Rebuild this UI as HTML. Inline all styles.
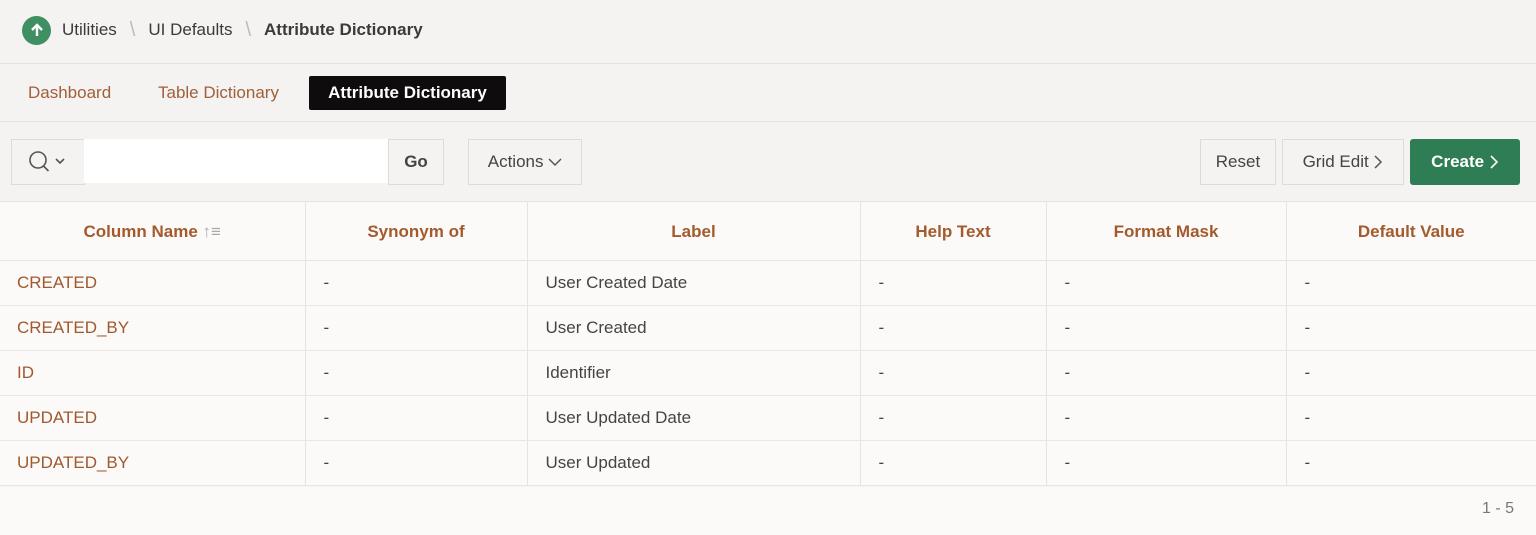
<!DOCTYPE html>
<html><head><style>
*{box-sizing:border-box;margin:0;padding:0}
body{width:1536px;height:535px;overflow:hidden;background:#f4f3f1;font-family:"Liberation Sans",sans-serif;color:#333;position:relative}
.abs{position:absolute}
.bc{top:14px;left:22px;height:32px;display:flex;align-items:center;font-size:17px;color:#3a3a3a}
.circ{width:29px;height:29px;border-radius:50%;background:#3f8f63;display:flex;align-items:center;justify-content:center;margin-right:11px}
.sep{color:#bbb;margin:0 13px;font-size:20px}
.hline{left:0;width:1536px;height:1px;background:#e4e2df}
.tab{top:76px;height:34px;font-size:17px;color:#a0603a;line-height:34px}
.btn{border:1px solid #dddbd8;background:#f4f3f1;font-size:17px;color:#444;display:flex;align-items:center;justify-content:center;height:46px;top:139px}
table{position:absolute;top:202px;left:0;width:1536px;border-collapse:collapse;background:#fbfaf9;font-size:17px}
th{height:58px;padding-top:2px;color:#a35a2c;font-weight:bold;border-right:1px solid #e6e4e1;border-bottom:1px solid #e6e4e1}
td{height:45.2px;border-right:1px solid #e6e4e1;border-bottom:1px solid #e9e7e4;padding-left:18px;color:#444}
td:first-child{padding-left:17px;color:#a0582d}
th:last-child,td:last-child{border-right:none}
</style></head><body>
<div class="abs bc"><div class="circ"><svg width="16" height="16" viewBox="0 0 16 16"><path d="M8 14V3M3 8l5-5 5 5" stroke="#fff" stroke-width="2.4" fill="none"/></svg></div>Utilities<span class="sep">\</span>UI Defaults<span class="sep">\</span><b>Attribute Dictionary</b></div>
<div class="abs hline" style="top:63px"></div>
<div class="abs tab" style="left:28px">Dashboard</div>
<div class="abs tab" style="left:158px">Table Dictionary</div>
<div class="abs tab" style="left:309px;width:197px;background:#0e0c0c;color:#fff;font-weight:bold;border-radius:2px;text-align:center">Attribute Dictionary</div>
<div class="abs hline" style="top:121px"></div>
<div class="abs btn" style="left:11px;width:74px"><svg width="44" height="24" viewBox="0 0 44 24"><circle cx="12" cy="10" r="8" stroke="#555" stroke-width="1.6" fill="none"/><path d="M17.5 16l5 5M30 9l4 4 4-4" stroke="#555" stroke-width="1.6" fill="none"/></svg></div>
<div class="abs" style="left:84px;top:139px;width:305px;height:44px;background:#fff"></div>
<div class="abs btn" style="left:388px;width:56px;font-weight:bold">Go</div>
<div class="abs btn" style="left:468px;width:114px">Actions&nbsp;<svg width="14" height="10"><path d="M1 2l6 6 6-6" stroke="#555" stroke-width="1.5" fill="none"/></svg></div>
<div class="abs btn" style="left:1200px;width:76px">Reset</div>
<div class="abs btn" style="left:1282px;width:122px">Grid Edit&nbsp;<svg width="10" height="14"><path d="M2 1l6 6-6 6" stroke="#555" stroke-width="1.5" fill="none"/></svg></div>
<div class="abs btn" style="left:1410px;width:110px;background:#2f7d55;border-color:#2f7d55;color:#fff;font-weight:bold;border-radius:3px">Create&nbsp;<svg width="10" height="14"><path d="M2 1l6 6-6 6" stroke="#fff" stroke-width="1.6" fill="none"/></svg></div>
<div class="abs hline" style="top:201px"></div>
<table>
<tr><th style="width:305px">Column Name <span style="color:#aaa;font-weight:normal">↑≡</span></th><th style="width:222px">Synonym of</th><th style="width:333px">Label</th><th style="width:186px">Help Text</th><th style="width:240px">Format Mask</th><th>Default Value</th></tr>
<tr><td>CREATED</td><td>-</td><td>User Created Date</td><td>-</td><td>-</td><td>-</td></tr>
<tr><td>CREATED_BY</td><td>-</td><td>User Created</td><td>-</td><td>-</td><td>-</td></tr>
<tr><td>ID</td><td>-</td><td>Identifier</td><td>-</td><td>-</td><td>-</td></tr>
<tr><td>UPDATED</td><td>-</td><td>User Updated Date</td><td>-</td><td>-</td><td>-</td></tr>
<tr><td>UPDATED_BY</td><td>-</td><td>User Updated</td><td>-</td><td>-</td><td>-</td></tr>
</table>
<div class="abs" style="top:487px;left:0;width:1536px;height:48px;background:#fbfaf9"></div>
<div class="abs" style="top:500px;right:22px;font-size:16px;color:#777">1 - 5</div>
</body></html>
